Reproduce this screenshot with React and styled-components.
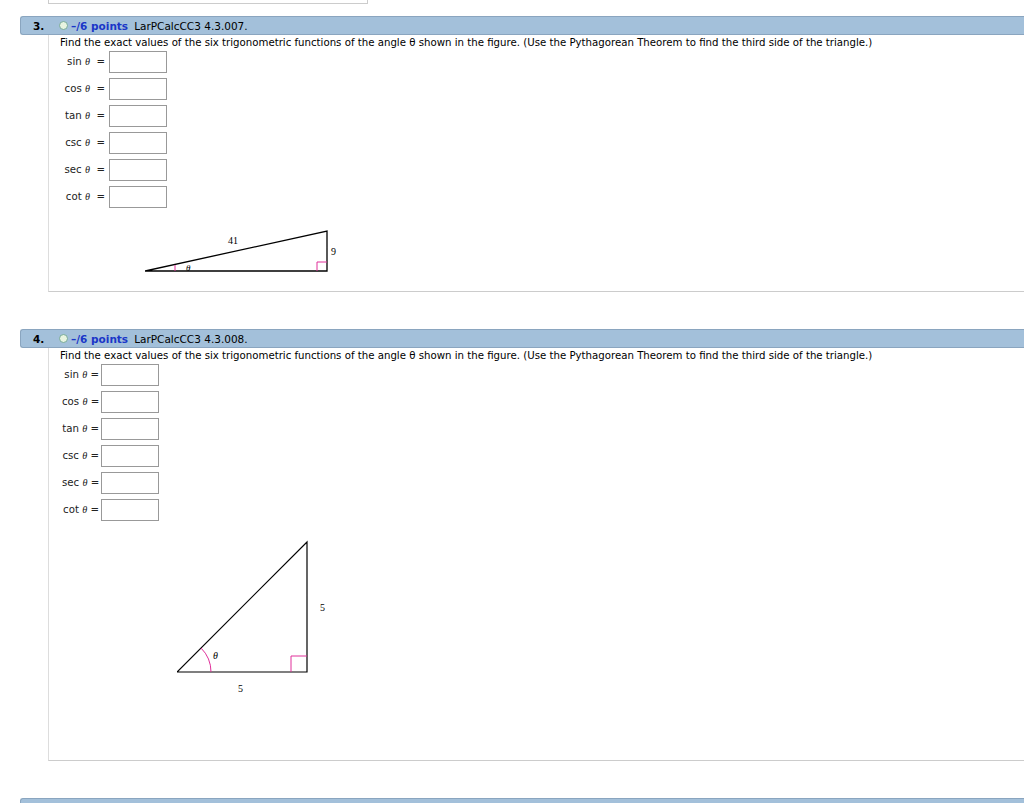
import React from 'react'
import styled, { createGlobalStyle } from 'styled-components'

const Global = createGlobalStyle`
  body { margin: 0; background: #fff; font-family: "Lucida Grande", "DejaVu Sans", Verdana, sans-serif; color: #000; }
`

const Page = styled.div`
  width: 1024px;
  height: 803px;
  overflow: hidden;
  position: relative;
`

const TopBox = styled.div`
  margin-left: 48px;
  width: 318px;
  height: 3px;
  border: 1px solid #ccc;
  border-top: none;
  margin-bottom: 12px;
`

const Question = styled.div`
  margin-bottom: ${p => p.gap}px;
`

const Header = styled.div`
  margin-left: 20px;
  height: 17px;
  background: #a3c0da;
  border: 1px solid #8aa5bf;
  border-right: none;
  border-radius: 3px 0 0 3px;
  display: flex;
  align-items: center;
  font-size: 10.5px;
`

const Num = styled.span`
  font-weight: bold;
  width: 26px;
  padding-left: 12px;
`

const Dot = styled.span`
  width: 7px;
  height: 7px;
  border-radius: 50%;
  background: #e8f4e0;
  border: 1px solid #7a9;
  margin-right: 3px;
`

const Points = styled.span`
  color: #1a36c8;
  font-weight: bold;
  margin-right: 6px;
`

const Body = styled.div`
  margin-left: 48px;
  height: ${p => p.h}px;
  border-left: 1px solid #ddd;
  border-bottom: 1px solid #ccc;
  padding: 2px 0 0 11px;
  font-size: 10.2px;
`

const Prompt = styled.div`
  margin-bottom: 0;
`

const Row = styled.div`
  display: flex;
  align-items: center;
  height: 27px;
  padding-left: ${p => p.indent}px;
`

const Label = styled.span`
  width: ${p => p.w}px;
  text-align: right;
  color: #222;
  white-space: pre;
`

const Box = styled.div`
  width: 56px;
  height: 20px;
  border: 1px solid #999;
  margin-left: ${p => p.ml}px;
`

const Figure = styled.svg`
  display: block;
  margin-left: ${p => p.ml}px;
  margin-top: ${p => p.mt}px;
  font-family: "Liberation Serif", serif;
`

const funcs = ['sin', 'cos', 'tan', 'csc', 'sec', 'cot']

function Rows({ indent, w, ml, sp }) {
  return funcs.map(f => (
    <Row key={f} indent={indent}>
      <Label w={w}>{f} <i style={{ fontFamily: 'Liberation Serif, serif' }}>θ</i>{sp}=</Label>
      <Box ml={ml} />
    </Row>
  ))
}

function Head({ n, id }) {
  return (
    <Header>
      <Num>{n}.</Num>
      <Dot />
      <Points>–/6 points</Points>
      <span>LarPCalcCC3 {id}.</span>
    </Header>
  )
}

const prompt = 'Find the exact values of the six trigonometric functions of the angle θ shown in the figure. (Use the Pythagorean Theorem to find the third side of the triangle.)'

export default function App() {
  return (
    <Page>
      <Global />
      <TopBox />
      <Question gap={37}>
        <Head n={3} id="4.3.007" />
        <Body h={254}>
          <Prompt>{prompt}</Prompt>
          <Rows indent={2} w={43} ml={4} sp="  " />
          <Figure ml={85} mt={16} width="200" height="60" viewBox="145 225 200 60">
            <polygon points="145,270 327,230 327,270" fill="none" stroke="#000" strokeWidth="1.3" />
            <polyline points="317,270 317,261 327,261" fill="none" stroke="#e0309a" />
            <path d="M175,264 L175,270" stroke="#e0309a" fill="none" />
            <text x="228" y="243" fontSize="10">41</text>
            <text x="331" y="254" fontSize="10">9</text>
            <text x="186" y="270" fontSize="9" fontStyle="italic">θ</text>
          </Figure>
        </Body>
      </Question>
      <Question gap={37}>
        <Head n={4} id="4.3.008" />
        <Body h={410}>
          <Prompt>{prompt}</Prompt>
          <Rows indent={2} w={37} ml={2} sp=" " />
          <Figure ml={117} mt={12} width="170" height="160" viewBox="177 535 170 160">
            <polygon points="177,672 307,542 307,672" fill="none" stroke="#000" strokeWidth="1.2" />
            <polyline points="291,672 291,656 307,656" fill="none" stroke="#e0309a" />
            <path d="M201,648 A34,34 0 0 1 211,672" stroke="#e0309a" fill="none" />
            <text x="320" y="611" fontSize="10">5</text>
            <text x="213" y="659" fontSize="10" fontStyle="italic">θ</text>
            <text x="238" y="692" fontSize="10">5</text>
          </Figure>
        </Body>
      </Question>
      <Header />
    </Page>
  )
}
